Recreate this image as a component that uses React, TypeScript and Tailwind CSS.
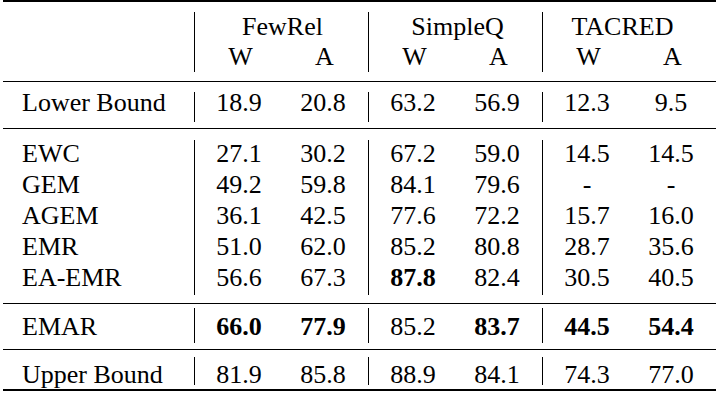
import React from "react";

type Cell = { v: string; b?: boolean };
type Row = { label: string; cells: Cell[] };

const c = (v: string, b?: boolean): Cell => ({ v, b });

function Section({
  pad,
  rowCls,
  rows,
}: {
  pad: string;
  rowCls: string;
  rows: Row[];
}) {
  return (
    <div className={`flex ${pad}`}>
      <div className="w-[191px] pl-[19px]">
        {rows.map((r) => (
          <div key={r.label} className={`${rowCls} whitespace-nowrap`}>
            {r.label}
          </div>
        ))}
      </div>
      {[0, 1, 2].map((g) => (
        <div key={g} className="w-[174px] border-l border-black pl-[2px]">
          {rows.map((r) => (
            <div key={r.label} className={`${rowCls} flex`}>
              {[0, 1].map((k) => {
                const cell = r.cells[g * 2 + k];
                return (
                  <div
                    key={k}
                    className={`w-[84px] text-center ${cell.b ? "font-bold" : ""}`}
                  >
                    {cell.v}
                  </div>
                );
              })}
            </div>
          ))}
        </div>
      ))}
    </div>
  );
}

export default function App() {
  const data: Row[] = [
    { label: "EWC", cells: [c("27.1"), c("30.2"), c("67.2"), c("59.0"), c("14.5"), c("14.5")] },
    { label: "GEM", cells: [c("49.2"), c("59.8"), c("84.1"), c("79.6"), c("-"), c("-")] },
    { label: "AGEM", cells: [c("36.1"), c("42.5"), c("77.6"), c("72.2"), c("15.7"), c("16.0")] },
    { label: "EMR", cells: [c("51.0"), c("62.0"), c("85.2"), c("80.8"), c("28.7"), c("35.6")] },
    { label: "EA-EMR", cells: [c("56.6"), c("67.3"), c("87.8", true), c("82.4"), c("30.5"), c("40.5")] },
  ];
  const groups = ["FewRel", "SimpleQ", "TACRED"];
  return (
    <div className="w-[721px] h-[401px] overflow-hidden bg-white font-['Liberation_Serif',serif] text-[26px] text-black">
      <div className="ml-[3px] w-[713px]">
        <div className="h-[2px] bg-black" />
        <div className="flex pt-[10px] pb-[9px]">
          <div className="w-[191px]" />
          {groups.map((g, i) => (
            <div key={g} className="w-[174px] border-l border-black pl-[2px]">
              <div
                className={`h-[30px] leading-[30px] text-center ${
                  i === 2 ? "pr-[16px]" : i === 1 ? "pl-[2px]" : ""
                }`}
              >
                {g}
              </div>
              <div className="h-[30px] leading-[30px] flex">
                <div className="w-[84px] text-center pl-[3px]">W</div>
                <div className="w-[84px] text-center pl-[3px]">A</div>
              </div>
            </div>
          ))}
        </div>
        <div className="h-px bg-black" />
        <Section
          pad="pt-[10px] pb-[6px]"
          rowCls="h-[30px] leading-[22px]"
          rows={[
            { label: "Lower Bound", cells: [c("18.9"), c("20.8"), c("63.2"), c("56.9"), c("12.3"), c("9.5")] },
          ]}
        />
        <div className="h-px bg-black" />
        <Section pad="pt-[11px] pb-[8px]" rowCls="h-[31px] leading-[28px]" rows={data} />
        <div className="h-px bg-black" />
        <Section
          pad="pt-[4px] pb-[6px]"
          rowCls="h-[35px] leading-[38px]"
          rows={[
            {
              label: "EMAR",
              cells: [c("66.0", true), c("77.9", true), c("85.2"), c("83.7", true), c("44.5", true), c("54.4", true)],
            },
          ]}
        />
        <div className="h-px bg-black" />
        <Section
          pad="pt-[7px] pb-[4px]"
          rowCls="h-[28px] leading-[36px]"
          rows={[
            { label: "Upper Bound", cells: [c("81.9"), c("85.8"), c("88.9"), c("84.1"), c("74.3"), c("77.0")] },
          ]}
        />
        <div className="h-[2px] bg-black" />
      </div>
    </div>
  );
}
